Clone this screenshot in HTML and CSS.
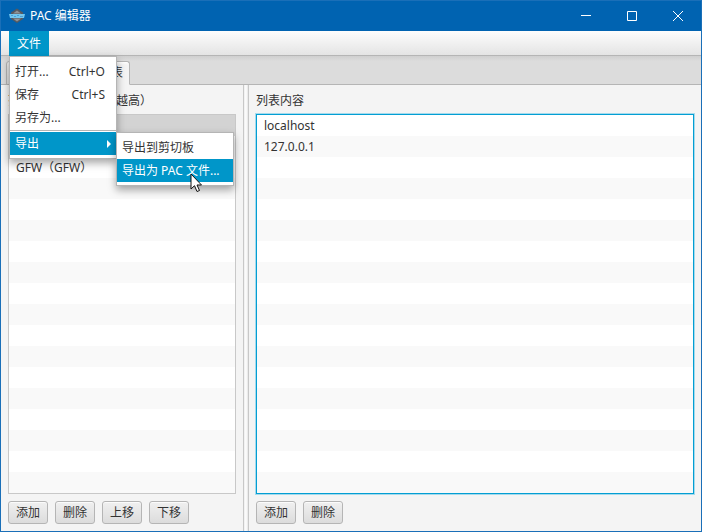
FILE: index.html
```html
<!DOCTYPE html>
<html lang="zh-CN">
<head>
<meta charset="utf-8">
<title>PAC 编辑器</title>
<link rel="stylesheet" href="styles.css">
</head>
<body>
<div class="window">
  <header class="titlebar">
    <svg class="logo" width="16" height="16" viewBox="0 0 16 16" aria-hidden="true">
      <path d="M8 0.500 14 4.500v6.500l-6 4-6-4V4.500z" fill="#55595f"/>
      <path d="M8 2.500 12 5.500H4zM4 10.500h8l-4 3z" fill="#8f9295"/>
      <path d="M0 6h16l-1 4H1z" fill="#72c6ee"/>
      <path d="M2 7.500h2M5 8.500h2M8 7.500h2M11 8.500h3" stroke="#4a9fd4"/>
    </svg>
    <h1 class="title">PAC 编辑器</h1>
    <button class="caption" type="button" aria-label="最小化"><svg width="12" height="12" viewBox="0 0 12 12"><path d="M1 5.500h10"/></svg></button>
    <button class="caption" type="button" aria-label="最大化"><svg width="12" height="12" viewBox="0 0 12 12"><path d="M1.500 1.500h9v9h-9z"/></svg></button>
    <button class="caption" type="button" aria-label="关闭"><svg width="12" height="12" viewBox="0 0 12 12"><path d="M1 1l10 10M11 1 1 11"/></svg></button>
  </header>
  <nav class="menubar">
    <div class="menu-root">
      <button class="menu-title" type="button">文件</button>
      <div class="menu menu-file">
        <button class="item" type="button">打开...<span>Ctrl+O</span></button>
        <button class="item" type="button">保存<span>Ctrl+S</span></button>
        <button class="item" type="button">另存为...</button>
        <hr>
        <div class="sub-root">
          <button class="item active" type="button">导出<svg width="4" height="8" viewBox="0 0 4 8" aria-hidden="true"><path d="M0 0l4 4-4 4z" fill="#fff"/></svg></button>
          <div class="menu menu-export">
            <button class="item" type="button">导出到剪切板</button>
            <button class="item active" type="button">导出为 PAC 文件...</button>
            <svg class="pointer" width="13" height="20" viewBox="0 0 13 20" aria-hidden="true"><path d="M1 1v15l3.500-3.300L7 18.500l2.500-1L7 12h4.500z" fill="#fff" stroke="#111"/></svg>
          </div>
        </div>
      </div>
    </div>
  </nav>
  <div class="tabs" role="tablist">
    <button class="tab" type="button" role="tab" aria-label="设置"></button>
    <button class="tab selected" type="button" role="tab">规则列表</button>
  </div>
  <main class="split">
    <section class="pane">
      <h2 class="label">列表（越靠前优先级越高）</h2>
      <ul class="list">
        <li class="chosen"></li>
        <li></li>
        <li>GFW（GFW）</li>
      </ul>
      <div class="actions">
        <button type="button">添加</button>
        <button type="button">删除</button>
        <button type="button">上移</button>
        <button type="button">下移</button>
      </div>
    </section>
    <div class="divider"></div>
    <section class="pane">
      <h2 class="label">列表内容</h2>
      <ul class="list focused">
        <li>localhost</li>
        <li>127.0.0.1</li>
      </ul>
      <div class="actions">
        <button type="button">添加</button>
        <button type="button">删除</button>
      </div>
    </section>
  </main>
</div>
</body>
</html>
```

FILE: styles.css
```css
* { box-sizing: border-box; }

body {
  margin: 0;
  color: #333;
  font: 12px/16px "Noto Sans", "Noto Sans CJK SC", sans-serif;
}

button { font: inherit; color: inherit; margin: 0; }

.window {
  display: flex;
  flex-direction: column;
  height: 100vh;
  border: 1px solid #1a6fb8;
  background: #f4f4f4;
}

.titlebar {
  display: flex;
  align-items: center;
  height: 30px;
  padding-left: 8px;
  background: #0063b1;
  color: #fff;
}

.title {
  flex: 1;
  margin: 0 0 0 5px;
  font-size: 12px;
  font-weight: 400;
}

.caption {
  display: flex;
  align-items: center;
  justify-content: center;
  width: 46px;
  height: 30px;
  padding: 0;
  border: 0;
  background: none;
}

.caption path { fill: none; stroke: #fff; }

.menubar {
  display: flex;
  height: 25px;
  padding-left: 8px;
  border-bottom: 1px solid #b5b5b5;
  background: linear-gradient(#fdfdfd, #e4e4e4);
}

.menu-root { position: relative; }

.menu-title {
  width: 40px;
  height: 25px;
  padding: 0;
  border: 0;
  background: #0096c9;
  color: #fff;
}

.menu {
  position: absolute;
  z-index: 2;
  border: 1px solid #b5b5b5;
  background: #fff;
  box-shadow: 0 4px 8px rgba(0, 0, 0, .35);
}

.menu-file {
  top: 25px;
  left: 0;
  width: 108px;
  padding: 3px 0;
}

.menu-export {
  top: 0;
  left: 100%;
  width: 118px;
  padding: 3px 0;
}

.menu hr {
  height: 1px;
  margin: 1px 0;
  border: 0;
  background: #b5b5b5;
}

.item {
  display: flex;
  align-items: center;
  justify-content: space-between;
  width: 100%;
  height: 23px;
  padding: 0 11px 0 5px;
  border: 0;
  background: none;
  white-space: nowrap;
}

.sub-root { position: relative; }
.sub-root > .item { padding-right: 5px; }
.item.active { background: #0096c9; color: #fff; }

.pointer {
  position: absolute;
  top: 40px;
  left: 73px;
}

.tabs {
  display: flex;
  align-items: flex-end;
  height: 29px;
  padding-left: 5px;
  background: linear-gradient(#cfcfcf, #dcdcdc 5px);
  box-shadow: inset 0 -1px #b5b5b5;
}

.tab {
  width: 62px;
  height: 24px;
  padding: 0 5px;
  border: 1px solid #b5b5b5;
  border-radius: 3px 3px 0 0;
  background: linear-gradient(#f0f0f0, #dcdcdc);
}

.tab.selected {
  border-bottom-color: #f4f4f4;
  background: linear-gradient(#fff, #f4f4f4 3px);
}

.split {
  display: grid;
  grid-template-columns: minmax(0, 242fr) 6px minmax(0, 452fr);
  flex: 1;
  min-height: 0;
}

.pane {
  display: flex;
  flex-direction: column;
  padding: 8px 7px 7px;
}

.divider {
  border: solid #c8c8c8;
  border-width: 0 1px;
  background: linear-gradient(90deg, #eee, #fff, #e4e4e4);
}

.label {
  height: 16px;
  margin: 0 0 5px;
  font-size: 12px;
  font-weight: 400;
}

.list {
  flex: 1;
  margin: 0 0 7px;
  padding: 0;
  border: 1px solid #c8c8c8;
  background: repeating-linear-gradient(#fff 0 21px, #f9f9f9 21px 42px);
  list-style: none;
}

.list li {
  height: 21px;
  padding: 0 7px;
  line-height: 21px;
}

.list .chosen { background: #d3d3d3; }

.list.focused {
  border-color: #039ed3;
  box-shadow: 0 0 0 1px #a5daec;
}

.actions { display: flex; gap: 7px; }

.actions button {
  width: 40px;
  height: 23px;
  padding: 0;
  border: 1px solid #b5b5b5;
  border-radius: 3px;
  background: linear-gradient(#f0f0f0, #dcdcdc);
  box-shadow: inset 0 1px #fbfbfb;
}
```
